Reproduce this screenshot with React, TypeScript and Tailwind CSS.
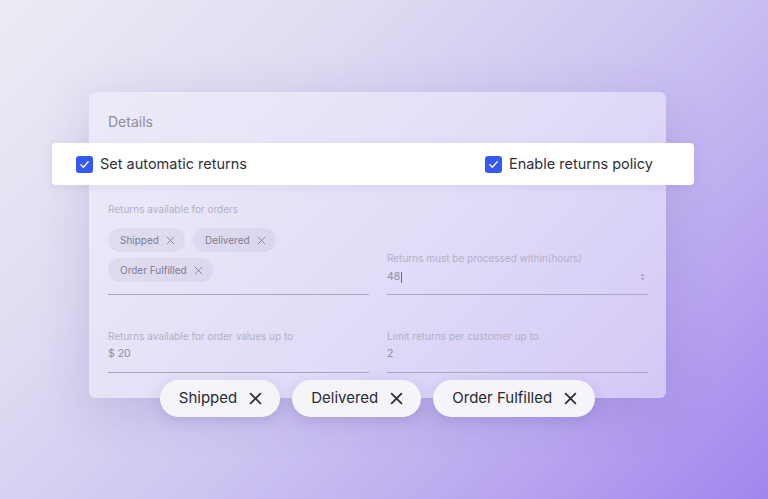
import React from "react";

const XIcon = ({ size, stroke, color }: { size: number; stroke: number; color: string }) => (
  <svg width={size} height={size} viewBox="0 0 12 12" fill="none">
    <path d="M1.5 1.5 L10.5 10.5 M10.5 1.5 L1.5 10.5" stroke={color} strokeWidth={stroke} strokeLinecap="round" />
  </svg>
);

const Check = () => (
  <div className="w-[17px] h-[17px] rounded-[3px] bg-[#3559f2] flex items-center justify-center shrink-0">
    <svg width="11" height="11" viewBox="0 0 12 12" fill="none">
      <path d="M2 6.3 L4.8 9 L10 3" stroke="white" strokeWidth="1.4" strokeLinecap="round" strokeLinejoin="round" />
    </svg>
  </div>
);

const SmallChip = ({ label }: { label: string }) => (
  <div className="h-[24px] rounded-full bg-[#1e1a50]/[0.05] pl-[12px] pr-[10px] flex items-center gap-[7px] text-[10px] text-[#7e7b90]">
    <span>{label}</span>
    <XIcon size={9} stroke={1.3} color="#8a8799" />
  </div>
);

const BigChip = ({ label }: { label: string }) => (
  <div className="h-[37px] rounded-full bg-[#f5f5f9] pl-[19px] pr-[18px] flex items-center gap-[12px] text-[15px] text-[#2a2a33] shadow-[0_4px_14px_rgba(90,70,160,0.18)]">
    <span>{label}</span>
    <XIcon size={13} stroke={1.7} color="#2f2f39" />
  </div>
);

export default function App() {
  return (
    <div
      className="w-[768px] h-[499px] overflow-hidden bg-[linear-gradient(135deg,#ececf4_0%,#dedbf2_30%,#cdc4f1_55%,#b9a6ef_78%,#a185ee_100%)] pt-[92px] pl-[89px]"
      style={{ fontFamily: "Inter, 'Noto Sans', sans-serif" }}
    >
      <div className="w-[577px] h-[306px] rounded-[6px] bg-[#f3f1fd]/50 shadow-[0_12px_50px_rgba(70,50,140,0.16)] pt-[20px] px-[19px] pr-[18px] flex flex-col">
        <div className="text-[14px] leading-[20px] text-[#8f8da0]">Details</div>
        <div className="mt-[11px] -ml-[56px] -mr-[46px] h-[42px] rounded-[4px] bg-white flex items-center justify-between pl-[24px] pr-[41px] shadow-[0_2px_10px_rgba(80,60,150,0.08)]">
          <div className="flex items-center gap-[7px]">
            <Check />
            <span className="text-[14.5px] text-[#2f2f3a]">Set automatic returns</span>
          </div>
          <div className="flex items-center gap-[7px]">
            <Check />
            <span className="text-[14.5px] text-[#2f2f3a]">Enable returns policy</span>
          </div>
        </div>
        <div className="grid grid-cols-2 gap-x-[18px] items-end">
          <div className="mt-[17px] border-b border-[#aaa6c2] pb-[12px]">
            <div className="text-[10px] leading-[14px] text-[#b3b0c6]">Returns available for orders</div>
            <div className="mt-[12px] flex flex-col gap-[6px] items-start">
              <div className="flex gap-[8px]">
                <SmallChip label="Shipped" />
                <SmallChip label="Delivered" />
              </div>
              <SmallChip label="Order Fulfilled" />
            </div>
          </div>
          <div className="border-b border-[#aaa6c2] pb-[9px]">
            <div className="text-[10px] leading-[14px] text-[#b3b0c6]">Returns must be processed within(hours)</div>
            <div className="mt-[4px] h-[16px] flex items-center justify-between">
              <div className="flex items-center text-[10.5px] text-[#8e8ba0]">
                <span>48</span>
                <span className="w-px h-[11px] bg-[#6f6c80] ml-[1px]" />
              </div>
              <svg width="7" height="10" viewBox="0 0 7 10" className="mr-[2px]">
                <path d="M1.5 4 L3.5 1.8 L5.5 4 Z M1.5 6 L3.5 8.2 L5.5 6 Z" fill="#a19db6" />
              </svg>
            </div>
          </div>
          <div className="mt-[34px] border-b border-[#aaa6c2] pb-[10px]">
            <div className="text-[10px] leading-[14px] text-[#b3b0c6]">Returns available for order values up to</div>
            <div className="mt-[3px] h-[16px] flex items-center text-[10.5px] text-[#8e8ba0]">$ 20</div>
          </div>
          <div className="mt-[34px] border-b border-[#aaa6c2] pb-[10px]">
            <div className="text-[10px] leading-[14px] text-[#b3b0c6]">Limit returns per customer up to</div>
            <div className="mt-[3px] h-[16px] flex items-center text-[10.5px] text-[#8e8ba0]">2</div>
          </div>
        </div>
      </div>
      <div className="w-[577px] -mt-[18px] flex justify-center gap-[12px] relative">
        <BigChip label="Shipped" />
        <BigChip label="Delivered" />
        <BigChip label="Order Fulfilled" />
      </div>
    </div>
  );
}
